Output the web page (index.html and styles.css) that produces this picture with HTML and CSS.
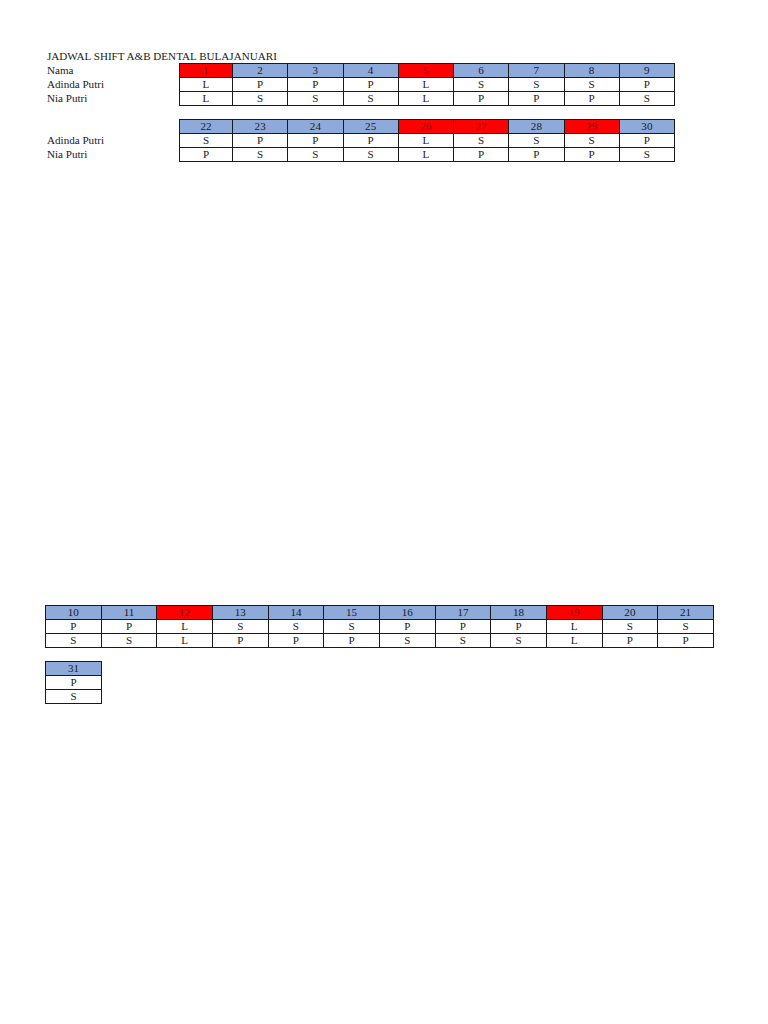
FILE: index.html
```html
<!DOCTYPE html>
<html>
<head>
<meta charset="utf-8">
<link rel="stylesheet" href="styles.css">
</head>
<body>
<div class="page">
  <div class="top">
    <div class="title">JADWAL SHIFT A&amp;B DENTAL BULAJANUARI</div>
    <table class="grid narrow">
      <tr><td class="label">Nama</td><td class="red first">1</td><td class="blue">2</td><td class="blue">3</td><td class="blue">4</td><td class="red">5</td><td class="blue">6</td><td class="blue">7</td><td class="blue">8</td><td class="blue">9</td></tr>
      <tr><td class="label">Adinda Putri</td><td>L</td><td>P</td><td>P</td><td>P</td><td>L</td><td>S</td><td>S</td><td>S</td><td>P</td></tr>
      <tr><td class="label">Nia Putri</td><td>L</td><td>S</td><td>S</td><td>S</td><td>L</td><td>P</td><td>P</td><td>P</td><td>S</td></tr>
    </table>
    <table class="grid narrow second">
      <tr><td class="label"></td><td class="blue first">22</td><td class="blue">23</td><td class="blue">24</td><td class="blue">25</td><td class="red">26</td><td class="red">27</td><td class="blue">28</td><td class="red">29</td><td class="blue">30</td></tr>
      <tr><td class="label">Adinda Putri</td><td>S</td><td>P</td><td>P</td><td>P</td><td>L</td><td>S</td><td>S</td><td>S</td><td>P</td></tr>
      <tr><td class="label">Nia Putri</td><td>P</td><td>S</td><td>S</td><td>S</td><td>L</td><td>P</td><td>P</td><td>P</td><td>S</td></tr>
    </table>
  </div>
  <div class="bottom">
    <table class="grid wide">
      <tr><td class="blue">10</td><td class="blue">11</td><td class="red">12</td><td class="blue">13</td><td class="blue">14</td><td class="blue">15</td><td class="blue">16</td><td class="blue">17</td><td class="blue">18</td><td class="red">19</td><td class="blue">20</td><td class="blue">21</td></tr>
      <tr><td>P</td><td>P</td><td>L</td><td>S</td><td>S</td><td>S</td><td>P</td><td>P</td><td>P</td><td>L</td><td>S</td><td>S</td></tr>
      <tr><td>S</td><td>S</td><td>L</td><td>P</td><td>P</td><td>P</td><td>S</td><td>S</td><td>S</td><td>L</td><td>P</td><td>P</td></tr>
    </table>
    <table class="grid single">
      <tr><td class="blue">31</td></tr>
      <tr><td>P</td></tr>
      <tr><td>S</td></tr>
    </table>
  </div>
</div>
</body>
</html>
```
FILE: styles.css
```css
html, body {
  margin: 0;
  padding: 0;
  background: #ffffff;
}
.page {
  font-family: "Liberation Serif", "Times New Roman", serif;
  font-size: 11.1px;
  color: #1a1a1a;
  padding-top: 49px;
}
.top {
  padding-left: 47px;
}
.title {
  height: 14px;
  line-height: 14px;
  white-space: nowrap;
}
.grid {
  border-collapse: collapse;
  table-layout: fixed;
}
.grid td {
  border: 1px solid #1a1a1a;
  height: 13px;
  line-height: 13px;
  padding: 0;
  text-align: center;
  vertical-align: middle;
  white-space: nowrap;
}
.grid td.label {
  border: none;
  border-right: 1px solid #1a1a1a;
  text-align: left;
  width: 132px;
}
.narrow {
  width: 628px;
}
.narrow td.first {
  width: 52px;
}
.second {
  margin-top: 13px;
}
.blue {
  background: #8eaadb;
}
.red {
  background: #ff0000;
  color: #7a0000;
}
.bottom {
  padding-left: 45px;
  margin-top: 443px;
}
.wide {
  width: 669px;
}
.single {
  margin-top: 13px;
  width: 57px;
}
```
